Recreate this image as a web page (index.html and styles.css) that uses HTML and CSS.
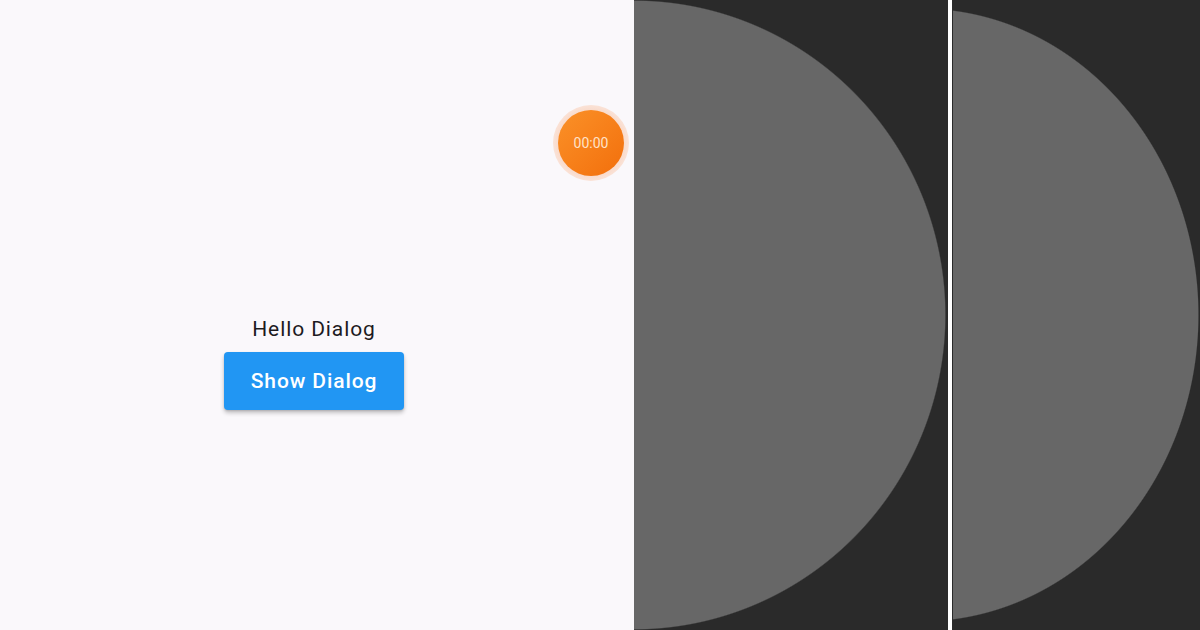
FILE: index.html
```html
<!DOCTYPE html>
<html lang="en">
<head>
    <meta charset="UTF-8">
    <meta name="viewport" content="width=device-width, initial-scale=1.0">
    <title>Hello Dialog</title>
    <link rel="stylesheet" href="styles.css">
</head>
<body>

<div class="screen">
    <!-- main app view -->
    <div class="app">
        <div class="app-body">
            <p class="hello">Hello Dialog</p>
            <button class="show-btn">Show Dialog</button>
        </div>

        <!-- floating timer bubble -->
        <div class="timer">
            <div class="timer-face">00:00</div>
        </div>
    </div>

    <!-- transition frames -->
    <div class="frame frame-one"></div>
    <div class="frame-gap"></div>
    <div class="frame frame-two"></div>
</div>

</body>
</html>
```

FILE: styles.css
```css
* {
    margin: 0;
    padding: 0;
    box-sizing: border-box;
}
body {
    font-family: Roboto, "Noto Sans", sans-serif;
    background-color: #2a2a2a;
    width: 1200px;
    height: 630px;
    overflow: hidden;
}
.screen {
    display: flex;
    height: 630px;
}
/* left side: the app */
.app {
    width: 634px;
    flex: 0 0 634px;
    position: relative;
    background-color: #faf8fb;
    display: flex;
    justify-content: center;
    padding-right: 6px;
}
.app-body {
    display: flex;
    flex-direction: column;
    align-items: center;
    padding-top: 314px;
}
.hello {
    font-size: 21px;
    line-height: 30px;
    letter-spacing: 0.9px;
    color: #1d1b1e;
    margin-bottom: 8px;
}
.show-btn {
    width: 180px;
    height: 58px;
    border: none;
    border-radius: 4px;
    background-color: #2196f3;
    color: #fff;
    font-family: Roboto, "Noto Sans", sans-serif;
    font-size: 21px;
    font-weight: 500;
    letter-spacing: 0.9px;
    box-shadow: 0 3px 4px rgba(0, 0, 0, 0.22), 0 1px 2px rgba(0, 0, 0, 0.12);
    cursor: pointer;
}
/* timer bubble */
.timer {
    position: absolute;
    left: 553px;
    top: 105px;
    width: 76px;
    height: 76px;
    border-radius: 50%;
    background: radial-gradient(circle, #f8d6c4 55%, #fbe6dc 75%, #fbf2f0 100%);
    display: flex;
    align-items: center;
    justify-content: center;
}
.timer-face {
    width: 66px;
    height: 66px;
    border-radius: 50%;
    background: linear-gradient(135deg, #fa9128 0%, #f7801a 50%, #f26f0c 100%);
    color: #ffe2c8;
    font-size: 14px;
    display: flex;
    align-items: center;
    justify-content: center;
}
/* dark frames with the grey half discs */
.frame {
    height: 630px;
}
.frame-one {
    flex: 0 0 314px;
    background: radial-gradient(ellipse 312px 315px at 0 315px, #676767 99.6%, #2a2a2a 100%);
}
.frame-gap {
    flex: 0 0 4px;
    background-color: #ffffff;
}
.frame-two {
    flex: 1;
    background: radial-gradient(ellipse 278px 307px at -32px 315px, #676767 99.6%, #2a2a2a 100%);
    border-left: 1px solid #2a2a2a;
}
```
